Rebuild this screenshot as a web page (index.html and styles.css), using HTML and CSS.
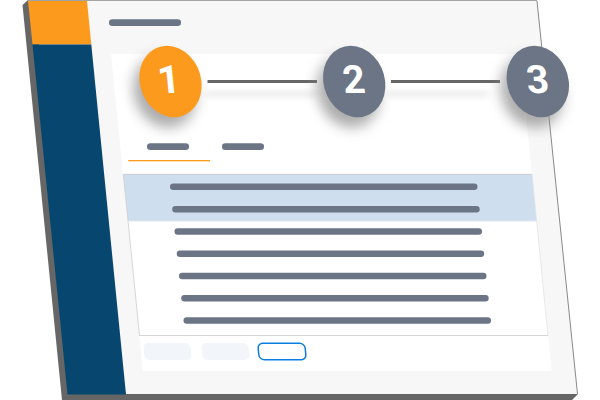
FILE: index.html
```html
<!DOCTYPE html>
<html lang="en">
<head>
<meta charset="utf-8">
<title>Step 1 of 3</title>
<link rel="stylesheet" href="styles.css">
</head>
<body>
<svg class="art" viewBox="0 0 600 400" width="600" height="400" xmlns="http://www.w3.org/2000/svg">
  <defs>
    <filter id="soft" x="-60%" y="-60%" width="220%" height="220%"><feGaussianBlur stdDeviation="6.5"/></filter>
    <filter id="softline" x="-10%" y="-600%" width="120%" height="1300%"><feGaussianBlur stdDeviation="3"/></filter>
  </defs>

  <polygon class="edge" points="28,0 22.5,5 62,400 572,400 578,394 126,394"/>
  <polygon class="panel" points="87,1 537,1 577,394 126,394"/>
  <polyline class="rim-top" points="28,0.5 537,0.5"/>
  <polyline class="rim-right" points="537,1 577.5,394"/>
  <polygon class="brand" points="28,1 87,1 91.3,44.5 32.5,44.5"/>
  <polygon class="nav" points="32.5,44.5 91.3,44.5 126,394.5 67.5,394.5"/>

  <rect class="bar" x="109" y="19.3" width="72" height="6.7" rx="3.3"/>

  <polygon class="sheet" points="111,54 520,54 551.7,371 142.7,371"/>
  <polygon class="selected" points="123.3,174 532,174 536.7,221 128,221"/>
  <polyline class="rule" points="123.3,174.3 532,174.3"/>
  <polyline class="rule" points="123.3,174 139.5,335.5 548,335.5"/>
  <polyline class="rule-faint" points="532,174 548,335.5"/>
  <polyline class="rule-faint" points="128,221 536.7,221"/>

  <rect class="bar" x="147" y="143.3" width="42" height="6.7" rx="3.3"/>
  <rect class="bar" x="222" y="143.3" width="42" height="6.7" rx="3.3"/>
  <rect class="tab-line" x="128.3" y="160" width="81.7" height="1.3"/>

  <rect class="bar" x="170" y="183.5" width="307.5" height="6.5" rx="3.2"/>
  <rect class="bar" x="172.2" y="206" width="307.5" height="6.5" rx="3.2"/>
  <rect class="bar" x="174.5" y="228.2" width="307.5" height="6.5" rx="3.2"/>
  <rect class="bar" x="176.7" y="250.5" width="307.5" height="6.5" rx="3.2"/>
  <rect class="bar" x="179" y="272.7" width="307.5" height="6.5" rx="3.2"/>
  <rect class="bar" x="181.2" y="295" width="307.5" height="6.5" rx="3.2"/>
  <rect class="bar" x="183.5" y="317.3" width="307.5" height="6.5" rx="3.2"/>

  <g transform="translate(167.5 351.5) skewX(5.7)"><rect class="btn" x="-23.5" y="-8.5" width="47" height="17" rx="5"/></g>
  <g transform="translate(225.5 351.5) skewX(5.7)"><rect class="btn" x="-23.5" y="-8.5" width="47" height="17" rx="5"/></g>
  <g transform="translate(282 351.5) skewX(5.7)"><rect class="btn-active" x="-23.5" y="-8.2" width="47" height="16.4" rx="5"/></g>

  <rect class="glow" x="205" y="92" width="112" height="4" filter="url(#softline)"/>
  <rect class="glow" x="388" y="92" width="100" height="4" filter="url(#softline)"/>
  <rect class="link" x="207.5" y="80" width="109.5" height="3"/>
  <rect class="link" x="391" y="80" width="109" height="3"/>

  <g transform="translate(164.5 92) skewX(5.7)"><ellipse class="halo" rx="31" ry="35.8" filter="url(#soft)"/></g>
  <g transform="translate(348.2 92) skewX(5.7)"><ellipse class="halo" rx="31" ry="35.8" filter="url(#soft)"/></g>
  <g transform="translate(531.8 92) skewX(5.7)"><ellipse class="halo" rx="31" ry="35.8" filter="url(#soft)"/></g>

  <g transform="translate(170.5 81.5) skewX(5.7)">
    <ellipse class="step-on" rx="31" ry="35.8"/>
    <text class="num" x="-1.5" y="11">1</text>
  </g>
  <g transform="translate(354.2 81.5) skewX(5.7)">
    <ellipse class="step-off" rx="31" ry="35.8"/>
    <text class="num" y="11">2</text>
  </g>
  <g transform="translate(537.8 81.5) skewX(5.7)">
    <ellipse class="step-off" rx="31" ry="35.8"/>
    <text class="num" y="11">3</text>
  </g>
</svg>
</body>
</html>
```
FILE: styles.css
```css
html, body {
  margin: 0;
  padding: 0;
  background: #ffffff;
}

.art {
  display: block;
}

.edge { fill: #666666; }
.panel { fill: #f7f7f7; }
.rim-top { fill: none; stroke: #a3a3a3; stroke-width: 1; }
.rim-right { fill: none; stroke: #6a6a6a; stroke-width: 0.8; }
.brand { fill: #fc9a1e; }
.nav { fill: #07466e; }
.sheet { fill: #ffffff; }
.selected { fill: #cfdeee; }
.rule { fill: none; stroke: #cccccc; stroke-width: 0.8; }
.rule-faint { fill: none; stroke: #dfe3e8; stroke-width: 0.8; }
.bar { fill: #6b7586; }
.tab-line { fill: #fc9a1e; }
.btn { fill: #f2f6fa; }
.btn-active { fill: #ffffff; stroke: #0a7ddf; stroke-width: 1.5; }
.link { fill: #666666; }
.glow { fill: #e2e2e2; }
.halo { fill: #8a8a8a; opacity: 0.7; }
.step-on { fill: #fc9a1e; }
.step-off { fill: #6b7586; }
.num {
  fill: #ffffff;
  font-family: "Roboto", sans-serif;
  font-weight: 700;
  font-size: 39px;
  text-anchor: middle;
}
```
